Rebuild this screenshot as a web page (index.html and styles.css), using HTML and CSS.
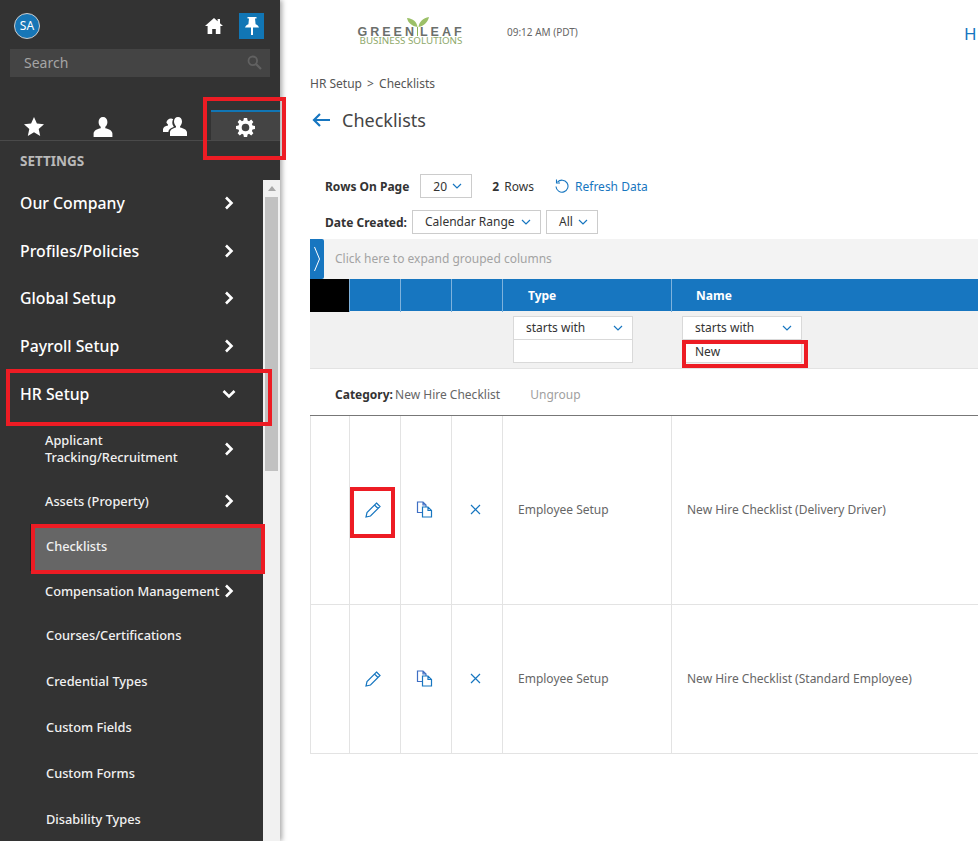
FILE: index.html
```html
<!DOCTYPE html>
<html>

<head>
  <meta charset="UTF-8">
  <title>Checklists</title>
  <link rel="stylesheet" href="styles.css">
</head>

<body>
  <div class="page">
    <aside class="sidebar">
      <div class="top-row">
        <div class="avatar">SA</div>
        <div class="top-actions">
          <svg class="home-icon" width="18" height="16" viewBox="0 0 18 16"><path fill="#fff" d="M9 0 0 8h2.6v8h4.6v-5h3.6v5h4.6V8H18l-3-2.7V1h-2.4v2.2z"/></svg>
          <div class="pin-btn">
            <svg width="16" height="18" viewBox="0 0 16 18"><path fill="#fff" d="M3.5 0h9v1.6H11l.6 5.6c1.7.7 2.9 1.8 3.4 3.3H9v7.5H7v-7.5H1c.5-1.5 1.700-2.600 3.400-3.300L5 1.600H3.500z"/></svg>
          </div>
        </div>
      </div>
      <div class="search">
        <span>Search</span>
        <svg width="15" height="15" viewBox="0 0 15 15"><circle cx="5.800" cy="5.800" r="4.300" fill="none" stroke="#616161" stroke-width="1.800"/><path d="m9 9 5 5" stroke="#616161" stroke-width="2.200"/></svg>
      </div>
      <div class="tabs">
        <div class="tab">
          <svg width="20" height="19" viewBox="0 0 20 19"><path fill="#fff" d="m10 0 2.900 6.400 7.100.8-5.300 4.700 1.500 7L10 15.300 3.800 18.900l1.500-7L0 7.200l7.100-.8z"/></svg>
        </div>
        <div class="tab">
          <svg width="20" height="20" viewBox="0 0 20 20"><path fill="#fff" d="M10 0c2.700 0 4.400 2.100 4.400 4.900 0 2-.8 3.800-2.100 4.900v1.400c3.600.8 7.100 2.400 7.100 5.400V20H.6v-3.400c0-3 3.500-4.600 7.100-5.400V9.800C6.400 8.700 5.600 6.900 5.600 4.900 5.600 2.100 7.300 0 10 0z"/></svg>
        </div>
        <div class="tab">
          <svg width="24" height="20" viewBox="0 0 24 20"><path fill="#fff" d="M15 0c2.500 0 4 2 4 4.600 0 1.900-.7 3.500-1.900 4.600v1.300c3.300.7 6.900 2.200 6.900 5V19H7v-3.500c0-2.800 2.800-4.300 6-5V9.200c-1.200-1.100-2-2.700-2-4.600C11 2 12.500 0 15 0z"/><path fill="#fff" d="M8 1.500c.9 0 1.600.3 2.200.8-.6.900-.9 1.900-.9 3.100 0 1.500.5 2.900 1.400 4v.6c-2.400.7-5.100 2.200-5.400 4.900H0v-2.600c0-2 2.300-3.200 5-3.800v-1C4 6.600 3.400 5.300 3.400 5.800 3.600 3.300 5.700 1.500 8 1.500z"/></svg>
        </div>
        <div class="tab tab-active">
          <svg width="19" height="19" viewBox="0 0 20 20"><path fill="#fff" fill-rule="evenodd" d="M8.300 0h3.400l.5 2.700 1.500.6L16 1.700l2.300 2.400-1.600 2.200.7 1.500L20 8.300v3.400l-2.600.5-.7 1.500 1.600 2.300-2.300 2.300-2.300-1.600-1.500.7-.5 2.600H8.300l-.5-2.600-1.500-.7L4 18.300 1.700 16l1.600-2.300-.7-1.500L0 11.700V8.300l2.600-.5.700-1.500-1.600-2.200L4 1.700l2.300 1.600 1.500-.6zM10 6a4 4 0 1 0 0 8 4 4 0 0 0 0-8z"/></svg>
        </div>
      </div>
      <div class="section-label">SETTINGS</div>
      <div class="nav-scroll">
        <ul class="nav-list">
          <li class="nav-item">Our Company <svg class="chev" width="10" height="14" viewBox="0 0 10 14"><path d="m2 1.500 5.500 5.500L2 12.500" fill="none" stroke="#fff" stroke-width="2.600"/></svg></li>
          <li class="nav-item">Profiles/Policies <svg class="chev" width="10" height="14" viewBox="0 0 10 14"><path d="m2 1.500 5.500 5.500L2 12.500" fill="none" stroke="#fff" stroke-width="2.600"/></svg></li>
          <li class="nav-item">Global Setup <svg class="chev" width="10" height="14" viewBox="0 0 10 14"><path d="m2 1.500 5.500 5.500L2 12.500" fill="none" stroke="#fff" stroke-width="2.600"/></svg></li>
          <li class="nav-item">Payroll Setup <svg class="chev" width="10" height="14" viewBox="0 0 10 14"><path d="m2 1.500 5.500 5.500L2 12.500" fill="none" stroke="#fff" stroke-width="2.600"/></svg></li>
          <li class="nav-item">HR Setup <svg class="chev-down" width="14" height="10" viewBox="0 0 14 10"><path d="m1.500 2 5.500 5.500L12.500 2" fill="none" stroke="#fff" stroke-width="2.600"/></svg></li>
          <li class="sub-item sub-tall"><span>Applicant<br>Tracking/Recruitment</span> <svg class="chev" width="10" height="14" viewBox="0 0 10 14"><path d="m2 1.500 5.500 5.500L2 12.500" fill="none" stroke="#fff" stroke-width="2.600"/></svg></li>
          <li class="sub-item">Assets (Property) <svg class="chev" width="10" height="14" viewBox="0 0 10 14"><path d="m2 1.500 5.500 5.500L2 12.500" fill="none" stroke="#fff" stroke-width="2.600"/></svg></li>
          <li class="sub-item sub-selected">Checklists</li>
          <li class="sub-item sub-comp">Compensation Management <svg class="chev" width="10" height="14" viewBox="0 0 10 14"><path d="m2 1.500 5.500 5.500L2 12.500" fill="none" stroke="#fff" stroke-width="2.600"/></svg></li>
          <li class="sub-item sub-plain">Courses/Certifications</li>
          <li class="sub-item sub-plain">Credential Types</li>
          <li class="sub-item sub-plain">Custom Fields</li>
          <li class="sub-item sub-plain">Custom Forms</li>
          <li class="sub-item sub-plain">Disability Types</li>
        </ul>
        <div class="scrollbar">
          <div class="scroll-arrow"></div>
          <div class="scroll-thumb"></div>
        </div>
      </div>
    </aside>

    <main class="content">
      <header class="header">
        <div class="logo">
          <svg class="logo-leaf" width="22" height="10" viewBox="0 0 22 10"><path fill="#9cc068" d="M10.500 10C10 5 6 1.500 0 1c1 5 5 8 10.500 9zM11.500 10C12 5 16 1 22 0c-1 5-5 9-10.500 10z"/></svg>
          <div class="logo-name">GREEN<span class="logo-bar"></span>LEAF</div>
          <div class="logo-sub">BUSINESS SOLUTIONS</div>
        </div>
        <div class="clock">09:12 AM (PDT)</div>
        <div class="header-cut">H</div>
      </header>

      <div class="breadcrumb">HR Setup <span class="crumb-sep">&gt;</span> Checklists</div>
      <div class="page-title">
        <svg width="18" height="14" viewBox="0 0 18 14"><path d="M18 7H2M8 1 2 7l6 6" fill="none" stroke="#1776c0" stroke-width="2.200"/></svg>
        <h1>Checklists</h1>
      </div>

      <div class="controls">
        <b class="ctl-label">Rows On Page</b>
        <div class="select select-rows">20 <svg class="caret" width="10" height="6" viewBox="0 0 10 6"><path d="m1 1 4 4 4-4" fill="none" stroke="#1776c0" stroke-width="1.200"/></svg></div>
        <span class="row-count"><b>2</b> Rows</span>
        <span class="refresh">
          <svg width="14" height="14" viewBox="0 0 14 14"><path d="M2.500 3.200A6 6 0 1 1 1 7.500" fill="none" stroke="#1776c0" stroke-width="1.100"/><path d="M1.500 .5v3.500H5" fill="none" stroke="#1776c0" stroke-width="1.100"/></svg>
          Refresh Data
        </span>
      </div>
      <div class="controls controls-date">
        <b class="ctl-label">Date Created:</b>
        <div class="select select-range">Calendar Range <svg class="caret" width="10" height="6" viewBox="0 0 10 6"><path d="m1 1 4 4 4-4" fill="none" stroke="#1776c0" stroke-width="1.200"/></svg></div>
        <div class="select select-all">All <svg class="caret" width="10" height="6" viewBox="0 0 10 6"><path d="m1 1 4 4 4-4" fill="none" stroke="#1776c0" stroke-width="1.200"/></svg></div>
      </div>

      <div class="group-bar">
        <div class="group-toggle">
          <svg width="8" height="26" viewBox="0 0 8 26"><path d="m1.500 1 5 12-5 12" fill="none" stroke="#fff" stroke-width="1"/></svg>
        </div>
        <span class="group-hint">Click here to expand grouped columns</span>
      </div>

      <div class="grid grid-head">
        <div class="cell-black"></div>
        <div class="head-cell"></div>
        <div class="head-cell"></div>
        <div class="head-cell"></div>
        <div class="head-cell head-type">Type</div>
        <div class="head-cell head-name">Name</div>
      </div>

      <div class="grid grid-filter">
        <div></div>
        <div></div>
        <div></div>
        <div></div>
        <div class="filter filter-type">
          <div class="filter-select">starts with <svg class="caret" width="10" height="6" viewBox="0 0 10 6"><path d="m1 1 4 4 4-4" fill="none" stroke="#1776c0" stroke-width="1.200"/></svg></div>
          <div class="filter-input"></div>
        </div>
        <div class="filter filter-name">
          <div class="filter-select">starts with <svg class="caret" width="10" height="6" viewBox="0 0 10 6"><path d="m1 1 4 4 4-4" fill="none" stroke="#1776c0" stroke-width="1.200"/></svg></div>
          <div class="filter-input">New</div>
        </div>
      </div>

      <div class="group-line">
        <b>Category:</b> New Hire Checklist
        <span class="ungroup">Ungroup</span>
      </div>

      <div class="grid grid-row row-first">
        <div class="cell"></div>
        <div class="cell cell-icon cell-edit">
          <svg width="18" height="18" viewBox="0 0 18 18"><path d="m12.500 2 3.500 3.500L6.500 15 2 16l1-4.500zM10.500 4l3.500 3.500" fill="none" stroke="#1776c0" stroke-width="1.200"/></svg>
        </div>
        <div class="cell cell-icon">
          <svg width="18" height="17" viewBox="0 0 18 17"><path d="M10 11.500H1.500V1H7l3 3v3M7 1v3h3" fill="none" stroke="#3f6fc4" stroke-width="1.200"/><path d="M6.500 6h5.500l3.500 3.500V16h-9zM12 6v3.500h3.500" fill="#fff" stroke="#1776c0" stroke-width="1.200"/></svg>
        </div>
        <div class="cell cell-icon">
          <svg width="11" height="11" viewBox="0 0 11 11"><path d="m1 1 9 9M10 1l-9 9" stroke="#1776c0" stroke-width="1.200"/></svg>
        </div>
        <div class="cell cell-text">Employee Setup</div>
        <div class="cell cell-text">New Hire Checklist (Delivery Driver)</div>
      </div>
      <div class="grid grid-row">
        <div class="cell"></div>
        <div class="cell cell-icon cell-edit">
          <svg width="18" height="18" viewBox="0 0 18 18"><path d="m12.500 2 3.500 3.500L6.500 15 2 16l1-4.500zM10.500 4l3.500 3.500" fill="none" stroke="#1776c0" stroke-width="1.200"/></svg>
        </div>
        <div class="cell cell-icon">
          <svg width="18" height="17" viewBox="0 0 18 17"><path d="M10 11.500H1.500V1H7l3 3v3M7 1v3h3" fill="none" stroke="#3f6fc4" stroke-width="1.200"/><path d="M6.500 6h5.500l3.500 3.500V16h-9zM12 6v3.500h3.500" fill="#fff" stroke="#1776c0" stroke-width="1.200"/></svg>
        </div>
        <div class="cell cell-icon">
          <svg width="11" height="11" viewBox="0 0 11 11"><path d="m1 1 9 9M10 1l-9 9" stroke="#1776c0" stroke-width="1.200"/></svg>
        </div>
        <div class="cell cell-text">Employee Setup</div>
        <div class="cell cell-text">New Hire Checklist (Standard Employee)</div>
      </div>
    </main>
  </div>

  <!-- red annotation boxes drawn over the screenshot -->
  <div class="mark mark-gear"></div>
  <div class="mark mark-hr"></div>
  <div class="mark mark-checklists"></div>
  <div class="mark mark-edit"></div>
  <div class="mark mark-new"></div>
</body>

</html>
```

FILE: styles.css
```css
* {
  box-sizing: border-box;
}

html, body {
  height: 100%;
}

body {
  margin: 0;
  font-family: "Noto Sans", sans-serif;
  background: #fff;
  color: #444;
  overflow: hidden;
  position: relative;
}

.page {
  display: flex;
  height: 841px;
  overflow: hidden;
}

/* sidebar */
.sidebar {
  flex: 0 0 280px;
  height: 841px;
  background: #333;
  box-shadow: 2px 0 5px rgba(0, 0, 0, 0.35);
  display: flex;
  flex-direction: column;
  position: relative;
  z-index: 1;
}

.top-row {
  display: flex;
  justify-content: space-between;
  align-items: center;
  padding: 12px 16px 0 14px;
  height: 39px;
}

.avatar {
  width: 26px;
  height: 26px;
  border-radius: 50%;
  background: #1776b6;
  border: 1px solid #ccc;
  color: #fff;
  font-size: 12px;
  text-align: center;
  line-height: 24px;
}

.top-actions {
  display: flex;
  align-items: center;
  gap: 16px;
}

.pin-btn {
  width: 25px;
  height: 26px;
  background: #1176b5;
  display: flex;
  align-items: center;
  justify-content: center;
}

.search {
  margin: 10px 10px 0;
  height: 28px;
  background: #444;
  display: flex;
  align-items: center;
  justify-content: space-between;
  padding: 0 8px 2px 14px;
  color: #a5a5a5;
  font-size: 14px;
}

.tabs {
  margin-top: 33px;
  height: 31px;
  display: grid;
  grid-template-columns: 68px 70px 73px 69px;
  border-bottom: 1px solid #4a4a4a;
}

.tab {
  display: flex;
  justify-content: center;
  padding-top: 7px;
}

.tab-active {
  background: #444;
  border-top: 2px solid #1176b5;
  padding-top: 6px;
}

.section-label {
  padding: 11px 0 0 20px;
  height: 39px;
  font-size: 13.500px;
  font-weight: 700;
  color: #b9b9b9;
}

.nav-scroll {
  display: flex;
  flex: 1;
  min-height: 0;
}

.nav-list {
  flex: 0 0 263px;
  list-style: none;
  margin: 0;
  padding: 0;
}

.nav-item {
  height: 47.800px;
  display: flex;
  align-items: center;
  justify-content: space-between;
  padding: 0 29px 2px 20px;
  color: #fff;
  font-size: 15.800px;
  font-weight: 500;
}

.sub-item {
  height: 45px;
  display: flex;
  align-items: center;
  justify-content: space-between;
  padding: 0 29px 0 45px;
  color: #f1f1f1;
  font-size: 12.800px;
  font-weight: 500;
  line-height: 17px;
}

.sub-tall {
  height: 58px;
  margin-top: 2px;
  padding-bottom: 1px;
}

.sub-plain {
  height: 46px;
  padding-left: 46px;
}

.sub-comp {
  margin-bottom: -1px;
}

.sub-selected {
  height: 47px;
  background: #666;
  margin: 0 0 -2px 30px;
  padding: 0 0 2px 15px;
  border-left: 1px solid #222;
}

.chev-down {
  margin-right: -2px;
}

.scrollbar {
  flex: 0 0 17px;
  background: #f1f1f1;
  padding: 0 2px;
}

.scroll-arrow {
  width: 0;
  height: 0;
  margin: 6px auto 0;
  border-left: 4px solid transparent;
  border-right: 4px solid transparent;
  border-bottom: 5px solid #a8a8a8;
}

.scroll-thumb {
  height: 274px;
  margin-top: 6px;
  background: #c1c1c1;
}

/* main column */
.content {
  flex: 1;
  min-width: 0;
  padding-left: 30px;
}

.header {
  height: 67px;
  position: relative;
  display: flex;
  align-items: flex-start;
  padding: 17px 0 0 47px;
}

.logo {
  width: 108px;
  text-align: center;
  line-height: 1;
}

.logo-leaf {
  display: block;
  margin: 0 auto;
  position: relative;
  left: 7px;
}

.logo-name {
  font-family: "Liberation Sans", sans-serif;
  font-weight: 700;
  font-size: 12.500px;
  line-height: 9px;
  letter-spacing: 3px;
  color: #6b6f6c;
  white-space: nowrap;
}

.logo-bar {
  display: inline-block;
  width: 1px;
  height: 9px;
  margin: 0 2px 0 0;
  background: #8db255;
}

.logo-sub {
  font-size: 9.800px;
  line-height: 8px;
  color: #8ea96a;
  white-space: nowrap;
}

.clock {
  margin: 8px 0 0 42px;
  font-size: 10px;
  color: #666;
}

.header-cut {
  position: absolute;
  left: 654px;
  top: 22px;
  color: #1776c0;
  font-size: 17px;
}

.breadcrumb {
  margin-top: 8px;
  font-size: 12px;
  line-height: 18px;
  color: #555;
}

.crumb-sep {
  margin: 0 2px;
}

.page-title {
  display: flex;
  align-items: center;
  gap: 12px;
  margin: 13px 0 0 2px;
  height: 28px;
}

.page-title h1 {
  margin: 0;
  font-size: 18px;
  font-weight: 400;
  color: #444;
}

.controls {
  display: flex;
  align-items: center;
  margin-top: 40px;
  padding-left: 15px;
  height: 24px;
  font-size: 12px;
  color: #333;
}

.controls-date {
  margin-top: 12px;
}

.ctl-label {
  font-weight: 700;
  color: #333;
}

.select {
  height: 24px;
  border: 1px solid #ccc;
  display: flex;
  align-items: center;
  justify-content: space-between;
  padding: 0 9px 0 12px;
  color: #333;
}

.select-rows {
  width: 52px;
  margin-left: 11px;
}

.select-range {
  width: 129px;
  margin-left: 5px;
  padding-bottom: 1px;
}

.select-all {
  width: 52px;
  margin-left: 5px;
  padding-bottom: 1px;
}

.row-count {
  margin-left: 20px;
}

.row-count b {
  margin-right: 2px;
}

.refresh {
  margin-left: 21px;
  color: #1776c0;
  display: flex;
  align-items: center;
  gap: 6px;
}

.group-bar {
  margin-top: 5px;
  height: 40px;
  width: 700px;
  background: #f3f3f3;
  display: flex;
  align-items: center;
  color: #a3a3a3;
  font-size: 12px;
}

.group-hint {
  margin-bottom: 2px;
}

.group-toggle {
  width: 14px;
  height: 40px;
  background: #1776c0;
  border-radius: 0 2px 2px 0;
  display: flex;
  align-items: center;
  justify-content: center;
  margin-right: 11px;
}

.grid {
  display: grid;
  grid-template-columns: 40px 51px 51px 51px 169px 400px;
  width: 762px;
}

.grid-head {
  height: 32px;
  background: #1776c0;
}

.cell-black {
  background: #000;
  border-right: 1px solid #7fb2dc;
}

.head-cell {
  border-right: 1px solid #7fb2dc;
  color: #fff;
  font-size: 12px;
  font-weight: 700;
  line-height: 33px;
}

.head-cell:last-child {
  border-right: 0;
}

.head-type {
  padding-left: 25px;
}

.head-name {
  padding-left: 24px;
}

.grid-filter {
  height: 58px;
  background: #f1f1f1;
  border-bottom: 1px solid #e3e3e3;
  padding-top: 5px;
}

.filter-type {
  padding-left: 10px;
}

.filter-name {
  padding-left: 10px;
}

.filter {
  font-size: 12px;
  color: #333;
}

.filter-select {
  width: 120px;
  height: 24px;
  background: #fff;
  border: 1px solid #d9d9d9;
  display: flex;
  align-items: center;
  justify-content: space-between;
  padding: 0 9px 1px 12px;
}

.filter-input {
  width: 120px;
  height: 23px;
  background: #fff;
  border: 1px solid #d9d9d9;
  border-top: 0;
  padding-left: 12px;
  line-height: 24px;
}

.group-line {
  height: 47px;
  padding: 17px 0 0 25px;
  font-size: 12px;
  line-height: 18px;
  color: #666;
  border-bottom: 1px solid #777;
}

.group-line b {
  color: #333;
  font-weight: 700;
  margin-right: -1px;
}

.ungroup {
  margin-left: 27px;
  color: #a0a0a0;
}

.grid-row {
  height: 149px;
  border-bottom: 1px solid #e3e3e3;
}

.row-first {
  height: 189px;
}

.cell {
  border-right: 1px solid #e3e3e3;
  display: flex;
  align-items: center;
}

.cell:first-child {
  border-left: 1px solid #e3e3e3;
}

.cell:last-child {
  border-right: 0;
}

.cell-icon {
  justify-content: center;
  padding-right: 3px;
  padding-bottom: 2px;
}

.cell-edit {
  padding-right: 5px;
  padding-bottom: 0;
}

.cell-text {
  padding: 0 0 2px 15px;
  font-size: 12px;
  color: #666;
}

/* annotations */
.mark {
  position: absolute;
  border: 4px solid #ed1c24;
  z-index: 2;
}

.mark-gear {
  left: 203px;
  top: 97px;
  width: 83px;
  height: 63px;
}

.mark-hr {
  left: 6px;
  top: 369px;
  width: 266px;
  height: 57px;
}

.mark-checklists {
  left: 31px;
  top: 524px;
  width: 234px;
  height: 50px;
}

.mark-edit {
  left: 350px;
  top: 487px;
  width: 45px;
  height: 51px;
}

.mark-new {
  left: 682px;
  top: 340px;
  width: 126px;
  height: 28px;
}
```
